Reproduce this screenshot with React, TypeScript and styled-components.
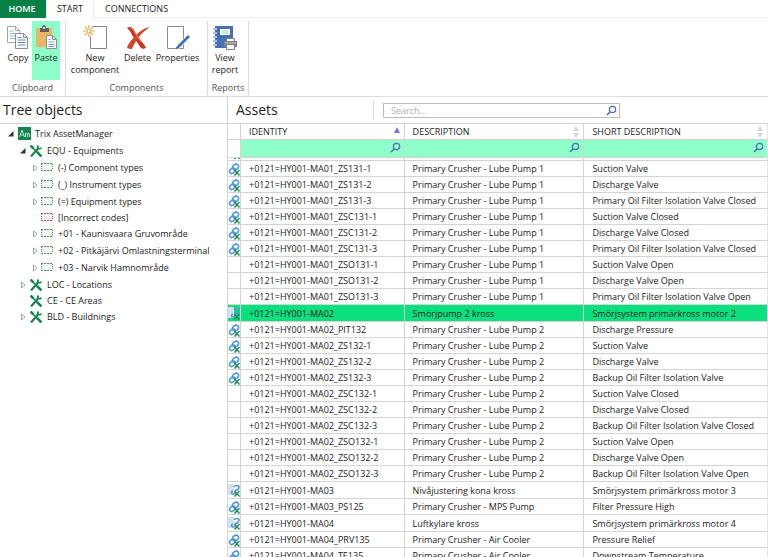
import React from "react";
import styled, { createGlobalStyle, css } from "styled-components";

const line = "#d4d4d4";

const GlobalStyle = createGlobalStyle`
  * { box-sizing: border-box; }
  html, body, #root { height: 100%; }
  body {
    margin: 0;
    background: #fff;
    color: #222;
    font-family: "Open Sans", "Noto Sans", sans-serif;
    font-size: 9px;
    overflow: hidden;
  }
  button, input { font: inherit; color: inherit; }
  button { border: 0; padding: 0; background: none; cursor: pointer; }
  svg { display: block; flex: none; }
`;

const Page = styled.div`
  height: 100vh;
  display: flex;
  flex-direction: column;
  overflow: hidden;
`;

const Tabs = styled.nav`
  display: flex;
  height: 18px;
  flex: none;
  border-bottom: 1px solid #ececec;
`;

const Tab = styled.button<{ $kind?: "home" | "active" }>`
  height: 18px;
  padding: 0 11px;
  line-height: 18px;
  ${(p) => p.$kind === "home" && css`
    width: 46px;
    padding: 0 2px 0 0;
    background: #087f45;
    color: #fff;
    font-weight: 600;
  `}
  ${(p) => p.$kind === "active" && css`
    width: 48px;
    padding: 0;
    background: #fff;
    border: 1px solid #ececec;
    border-width: 0 1px;
  `}
`;

const Ribbon = styled.header`
  display: flex;
  flex: none;
  height: 79px;
  padding: 3px 0 1px;
  border-bottom: 1px solid #dedede;
`;

const Group = styled.section<{ $width: number }>`
  width: ${(p) => p.$width}px;
  display: flex;
  flex-direction: column;
  border-right: 1px solid #dcdcdc;
`;

const Tools = styled.div<{ $inset: number }>`
  display: flex;
  height: 59px;
  padding-left: ${(p) => p.$inset}px;
`;

const Tool = styled.button<{ $width: number; $active?: boolean }>`
  width: ${(p) => p.$width}px;
  height: 59px;
  padding-top: 4px;
  display: flex;
  flex-direction: column;
  align-items: center;
  line-height: 12px;
  background: ${(p) => (p.$active ? "#8effc9" : "transparent")};
  span { margin-top: 2px; }
`;

const GroupName = styled.div`
  text-align: center;
  line-height: 15px;
  color: #505050;
`;

const Body = styled.main`
  flex: 1;
  min-height: 0;
  display: grid;
  grid-template-columns: 228px minmax(0, 1fr);
`;

const Sidebar = styled.aside`
  border-right: 1px solid ${line};
`;

const PanelHead = styled.div`
  display: flex;
  align-items: center;
  height: 27px;
  border-bottom: 1px solid ${line};
`;

const Title = styled.h2<{ $inset: number }>`
  margin: 0;
  padding-left: ${(p) => p.$inset}px;
  font-size: 14px;
  line-height: 24px;
  font-weight: 400;
`;

const Tree = styled.ul`
  list-style: none;
  margin: 0;
  padding: 1px 0 0;
`;

const TreeRow = styled.li<{ $level: number; $leaf?: boolean }>`
  display: flex;
  align-items: center;
  height: ${(p) => (p.$leaf ? 15 : 17)}px;
  padding-left: ${(p) => 6 + p.$level * 12}px;
  white-space: nowrap;
`;

const Twisty = styled.button`
  width: 10px;
  height: 14px;
  display: flex;
  align-items: center;
  justify-content: center;
`;

const NodeIcon = styled.span<{ $level: number }>`
  width: ${(p) => (p.$level === 2 ? 18 : 19)}px;
  display: flex;
  padding-left: ${(p) => (p.$level === 2 ? 1 : 2)}px;
`;

const Content = styled.section`
  min-width: 0;
  overflow: hidden;
`;

const SearchArea = styled.div`
  margin-left: auto;
  width: 395px;
  height: 20px;
  padding-left: 9px;
  border-left: 1px solid #dcdcdc;
  display: flex;
  align-items: center;
`;

const SearchBox = styled.label`
  width: 237px;
  height: 15px;
  display: flex;
  align-items: center;
  padding: 0 2px 0 7px;
  border: 1px solid #bdbdbd;
  input {
    flex: 1;
    min-width: 0;
    height: 13px;
    padding: 0;
    border: 0;
    outline: 0;
    background: none;
  }
  input::placeholder { color: #b0b0b0; opacity: 1; }
`;

const Table = styled.table`
  width: 100%;
  table-layout: fixed;
  border-collapse: separate;
  border-spacing: 0;
  th, td {
    padding: 0 0 0 8px;
    border-right: 1px solid ${line};
    border-bottom: 1px solid ${line};
    font-weight: 400;
    text-align: left;
    white-space: nowrap;
    overflow: hidden;
  }
  td:first-child { padding: 0; }
  th:last-child, td:last-child { border-right-color: #e6e6e6; }
`;

const HeadRow = styled.tr`
  th { height: 16px; line-height: 15px; }
`;

const HeadCell = styled.div`
  display: flex;
  align-items: center;
  justify-content: space-between;
  padding-right: 3px;
`;

const FilterRow = styled.tr`
  td { height: 18px; background: #8effc9; }
  td:first-child { background: #fff; }
`;

const FilterBox = styled.label`
  height: 17px;
  display: flex;
  align-items: center;
  padding: 0 3px 2px 0;
  input {
    flex: 1;
    min-width: 0;
    height: 14px;
    padding: 0;
    border: 0;
    outline: 0;
    background: none;
  }
`;

const GapRow = styled.tr`
  td { height: 3px; line-height: 0; font-size: 0; }
`;

const Row = styled.tr<{ $system: boolean; $selected: boolean }>`
  td {
    height: ${(p) => (p.$system ? 17 : 16)}px;
    line-height: 15px;
    background: ${(p) => (p.$selected ? "#0be07e" : "#fff")};
  }
`;

const CopyIcon = () => (
  <svg width="24" height="25" viewBox="0 0 24 25" fill="#fff" stroke="#a2a6ab">
    <path d="M1.5 1.5h8l4 4v12h-12z" />
    <path d="M9.5 1.5v4h4" fill="none" />
    <path d="M3.5 6h4M3.5 8.500h7M3.500 11h7M3.500 13.500h7" stroke="#9db8de" />
    <path d="M9.500 8.500h8l4 4v11h-12z" stroke="#8a8f96" />
    <path d="M17.500 8.500v4h4" fill="none" stroke="#8a8f96" />
    <path d="M11.500 12.500h4M11.500 15h8M11.500 17.500h8M11.500 20h8" stroke="#5f8bc9" />
  </svg>
);

const PasteIcon = () => (
  <svg width="24" height="25" viewBox="0 0 24 25">
    <path d="M2 3h16v19H2z" fill="#e8b768" />
    <path d="M6 3h2c0-4 4-4 4 0h3v4H6z" fill="#5f5f5f" />
    <circle cx="10" cy="3" r="1" fill="#fff" />
    <path d="M12.500 10.500h6l4 4v9h-10z" fill="#fff" stroke="#8a8f96" />
    <path d="M18.500 10.500v4h4" fill="none" stroke="#8a8f96" />
    <path d="M14.500 14.500h2M14.500 17h6M14.500 19.500h6M14.500 21.500h6" stroke="#7c9fd2" />
  </svg>
);

const NewIcon = () => (
  <svg width="26" height="25" viewBox="0 0 26 25" fill="none">
    <path d="M8.500 1.500h16v22h-16z" fill="#fff" stroke="#858585" />
    <circle cx="7" cy="6" r="6" fill="#fff" />
    <path d="M7 0v3M7 9v3M1 6h3M10 6h3M3 2l2 2M9 8l2 2M11 2L9 4M5 8l-2 2" stroke="#e6ab4b" strokeWidth="1.200" />
    <circle cx="7" cy="6" r="2" stroke="#e6ab4b" strokeWidth="1.200" />
  </svg>
);

const DeleteIcon = () => (
  <svg width="26" height="25" viewBox="0 0 26 25">
    <path d="M2 3c3-2 5-1 7 2 2 4 5 8 8 12 2 2 3 4 4 6-2 1-4 1-5 0C13 19 10 14 7 10 6 7 4 5 2 3z" fill="#c9351d" />
    <path d="M25 2c-7 5-11 9-14 14-1 2-3 5-4 8-2 0-4 0-5-2 2-4 5-8 9-12 4-4 8-7 14-8z" fill="#d5452b" />
    <path d="M5 3c2 0 3 2 5 5l6 9" fill="none" stroke="#ea7a60" />
  </svg>
);

const PropertiesIcon = () => (
  <svg width="26" height="25" viewBox="0 0 26 25">
    <path d="M2.500 1.500h16v22h-16z" fill="#fff" stroke="#8a8a8a" />
    <path d="M11 25l1-4L23 9l3 3-11 11z" fill="#fff" />
    <path d="M11 24l2-4L23 10l2 2-10 10z" fill="#3f70ba" />
    <path d="M11 24l1-3 2 2z" fill="#274a85" />
  </svg>
);

const ReportIcon = () => (
  <svg width="26" height="25" viewBox="0 0 26 25">
    <path d="M3 1h18v22H3z" fill="#4570b5" />
    <path d="M8 4h10v6H8z" fill="#fff" />
    <path d="M10 6h6M10 8h6" stroke="#a9bfe2" />
    <path d="M1 4h4M1 8h4M1 12h4M1 16h4M1 20h4" stroke="#fff" strokeWidth="2" />
    <path d="M1 4h4M1 8h4M1 12h4M1 16h4M1 20h4" stroke="#5d7fbd" />
    <path d="M14.500 13.500h8v4h-8z" fill="#fff" stroke="#808080" />
    <path d="M12 16h13v6H12z" fill="#808080" />
    <path d="M13 18h11" stroke="#d0d0d0" />
    <path d="M14.500 19.500h8v5h-8z" fill="#fff" stroke="#808080" />
  </svg>
);

const SearchIcon = () => (
  <svg width="11" height="11" viewBox="0 0 11 11" fill="none" stroke="#4a6fb8" strokeWidth="1.200">
    <circle cx="6.500" cy="4.500" r="3.200" />
    <path d="M4 7L1 10" strokeWidth="1.600" />
  </svg>
);

const ToolsIcon = () => (
  <svg width="12" height="12" viewBox="0 0 12 12" stroke="#168451" fill="none">
    <path d="M1 11.500l7-8" strokeWidth="2.200" />
    <path d="M8.500.5c-2 2 0 4 3 2.500" strokeWidth="1.800" />
    <path d="M.5.500l3 3M7 7l4.500 4.500" strokeWidth="2.600" />
    <path d="M3 3l6 6" strokeWidth="1.500" />
  </svg>
);

const TypeIcon = ({ red }: { red?: boolean }) => (
  <svg width="12" height="12" viewBox="0 0 12 12" stroke={red ? "#cf4444" : "#3f9650"}>
    <path d="M0 1h12v8H0z" fill="#f7f7f7" stroke="none" />
    <path d="M0 1.500h12M0 8.500h12" strokeDasharray="2 1" />
    <path d="M.5 2v6M11.500 2v6" strokeDasharray="1 1" />
  </svg>
);

const AppIcon = () => (
  <svg width="13" height="13" viewBox="0 0 13 13">
    <path d="M0 0h13v13H0z" fill="#168451" />
    <path d="M1.500 10L4 3l2.500 7M2.500 8H6M7.500 10V6M7.500 7c0-1 2-1 2 0v3M9.500 7c0-1 2-1 2 0v3" fill="none" stroke="#b9e2cd" />
  </svg>
);

const Arrow = ({ open }: { open: boolean }) => (
  <svg width="8" height="8" viewBox="0 0 8 8">
    {open ? <path d="M6.500 1v5.500H1z" fill="#333" /> : <path d="M2.500 1L6 4 2.500 7z" fill="#fff" stroke="#a4a4a4" />}
  </svg>
);

const SortIcon = ({ up }: { up?: boolean }) => (
  <svg width="8" height="12" viewBox="0 0 8 12">
    {up ? <path d="M4 1l3 6H1z" fill="#8175dc" /> : <path d="M4 0l3 5H1zM4 12L1 7h6z" fill="#d6d6d6" />}
  </svg>
);

const LinkIcon = ({ page }: { page?: boolean }) => (
  <svg width="12" height="14" viewBox="0 0 12 14" fill="none">
    {page ? (
      <>
        <path d="M0 1h5l1 1v10H0z" fill="#d3e2f1" />
        <path d="M6 4c1-2 5-2 5 0s-2 4-4 3M5 8c-2 0-2 3 0 3s2-1 3-2" stroke="#5596d3" strokeWidth="1.600" />
      </>
    ) : (
      <>
        <ellipse cx="7.500" cy="5" rx="3.200" ry="2.500" transform="rotate(-35 7.500 5)" stroke="#4a97dc" strokeWidth="1.600" />
        <ellipse cx="4.500" cy="8.800" rx="3.200" ry="2.300" transform="rotate(-35 4.500 8.800)" stroke="#4a97dc" strokeWidth="1.600" />
      </>
    )}
    <path d="M6.500 8l5 5.500M11.500 8l-5 5.500" stroke="#1f8a50" strokeWidth="1.500" />
  </svg>
);

const LinkTail = () => (
  <svg width="12" height="2" viewBox="0 0 12 2">
    <path d="M6 0h2v1H6zM10 0h2v1h-2z" fill="#4ba176" />
  </svg>
);

type Kind = "app" | "tools" | "type" | "wrong";
const tree: { level: number; label: string; kind: Kind; open?: boolean; leaf?: boolean }[] = [
  { level: 0, label: "Trix AssetManager", kind: "app", open: true },
  { level: 1, label: "EQU - Equipments", kind: "tools", open: true },
  { level: 2, label: "(-) Component types", kind: "type" },
  { level: 2, label: "(_) Instrument types", kind: "type" },
  { level: 2, label: "(=) Equipment types", kind: "type" },
  { level: 2, label: "[Incorrect codes]", kind: "wrong", leaf: true },
  { level: 2, label: "+01 - Kaunisvaara Gruvområde", kind: "type" },
  { level: 2, label: "+02 - Pitkäjärvi Omlastningsterminal", kind: "type" },
  { level: 2, label: "+03 - Narvik Hamnområde", kind: "type" },
  { level: 1, label: "LOC - Locations", kind: "tools" },
  { level: 1, label: "CE - CE Areas", kind: "tools", leaf: true },
  { level: 1, label: "BLD - Buildnings", kind: "tools" },
];

type Mark = "link" | "page" | "";
const p1 = "Primary Crusher - Lube Pump 1";
const p2 = "Primary Crusher - Lube Pump 2";
const assets: [Mark, string, string, string][] = [
  ["link", "MA01_ZS131-1", p1, "Suction Valve"],
  ["link", "MA01_ZS131-2", p1, "Discharge Valve"],
  ["link", "MA01_ZS131-3", p1, "Primary Oil Filter Isolation Valve Closed"],
  ["link", "MA01_ZSC131-1", p1, "Suction Valve Closed"],
  ["link", "MA01_ZSC131-2", p1, "Discharge Valve Closed"],
  ["link", "MA01_ZSC131-3", p1, "Primary Oil Filter Isolation Valve Closed"],
  ["", "MA01_ZSO131-1", p1, "Suction Valve Open"],
  ["", "MA01_ZSO131-2", p1, "Discharge Valve Open"],
  ["", "MA01_ZSO131-3", p1, "Primary Oil Filter Isolation Valve Open"],
  ["page", "MA02", "Smörjpump 2 kross", "Smörjsystem primärkross motor 2"],
  ["link", "MA02_PIT132", p2, "Discharge Pressure"],
  ["link", "MA02_ZS132-1", p2, "Suction Valve"],
  ["link", "MA02_ZS132-2", p2, "Discharge Valve"],
  ["link", "MA02_ZS132-3", p2, "Backup Oil Filter Isolation Valve"],
  ["", "MA02_ZSC132-1", p2, "Suction Valve Closed"],
  ["", "MA02_ZSC132-2", p2, "Discharge Valve Closed"],
  ["", "MA02_ZSC132-3", p2, "Backup Oil Filter Isolation Valve Closed"],
  ["", "MA02_ZSO132-1", p2, "Suction Valve Open"],
  ["", "MA02_ZSO132-2", p2, "Discharge Valve Open"],
  ["", "MA02_ZSO132-3", p2, "Backup Oil Filter Isolation Valve Open"],
  ["page", "MA03", "Nivåjustering kona kross", "Smörjsystem primärkross motor 3"],
  ["link", "MA03_PS125", "Primary Crusher - MPS Pump", "Filter Pressure High"],
  ["page", "MA04", "Luftkylare kross", "Smörjsystem primärkross motor 4"],
  ["link", "MA04_PRV135", "Primary Crusher - Air Cooler", "Pressure Relief"],
  ["link", "MA04_TE135", "Primary Crusher - Air Cooler", "Downstream Temperature"],
];

const columns = ["IDENTITY", "DESCRIPTION", "SHORT DESCRIPTION"];

const LinkCol = styled.col`width: 13px;`;
const IdentityCol = styled.col`width: 30.3%;`;
const DescriptionCol = styled.col`width: 33.3%;`;

export default function App() {
  return (
    <Page>
      <GlobalStyle />
      <Tabs>
        <Tab $kind="home">HOME</Tab>
        <Tab $kind="active">START</Tab>
        <Tab>CONNECTIONS</Tab>
      </Tabs>
      <Ribbon>
        <Group $width={66}>
          <Tools $inset={4}>
            <Tool $width={28}><CopyIcon /><span>Copy</span></Tool>
            <Tool $width={28} $active><PasteIcon /><span>Paste</span></Tool>
          </Tools>
          <GroupName>Clipboard</GroupName>
        </Group>
        <Group $width={142}>
          <Tools $inset={2}>
            <Tool $width={54}><NewIcon /><span>New<br />component</span></Tool>
            <Tool $width={31}><DeleteIcon /><span>Delete</span></Tool>
            <Tool $width={49}><PropertiesIcon /><span>Properties</span></Tool>
          </Tools>
          <GroupName>Components</GroupName>
        </Group>
        <Group $width={41}>
          <Tools $inset={0}>
            <Tool $width={34}><ReportIcon /><span>View<br />report</span></Tool>
          </Tools>
          <GroupName>Reports</GroupName>
        </Group>
      </Ribbon>
      <Body>
        <Sidebar>
          <PanelHead><Title $inset={3}>Tree objects</Title></PanelHead>
          <Tree>
            {tree.map((n) => (
              <TreeRow key={n.label} $level={n.level} $leaf={n.leaf}>
                <Twisty aria-label={`Toggle ${n.label}`} disabled={n.leaf}>{!n.leaf && <Arrow open={!!n.open} />}</Twisty>
                <NodeIcon $level={n.level}>
                  {n.kind === "app" ? <AppIcon /> : n.kind === "tools" ? <ToolsIcon /> : <TypeIcon red={n.kind === "wrong"} />}
                </NodeIcon>
                {n.label}
              </TreeRow>
            ))}
          </Tree>
        </Sidebar>
        <Content>
          <PanelHead>
            <Title $inset={8}>Assets</Title>
            <SearchArea>
              <SearchBox>
                <input type="text" placeholder="Search..." aria-label="Search assets" />
                <SearchIcon />
              </SearchBox>
            </SearchArea>
          </PanelHead>
          <Table>
            <colgroup>
              <LinkCol />
              <IdentityCol />
              <DescriptionCol />
              <col />
            </colgroup>
            <thead>
              <HeadRow>
                <th aria-label="Links" />
                {columns.map((c, i) => (
                  <th key={c}><HeadCell>{c}<SortIcon up={i === 0} /></HeadCell></th>
                ))}
              </HeadRow>
            </thead>
            <tbody>
              <FilterRow>
                <td />
                {columns.map((c) => (
                  <td key={c}><FilterBox><input type="text" aria-label={`Filter ${c}`} /><SearchIcon /></FilterBox></td>
                ))}
              </FilterRow>
              <GapRow><td><LinkTail /></td><td /><td /><td /></GapRow>
              {assets.map(([mark, id, desc, short]) => (
                <Row key={id} $system={mark === "page"} $selected={id === "MA02"}>
                  <td>{mark && <LinkIcon page={mark === "page"} />}</td>
                  <td>+0121=HY001-{id}</td>
                  <td>{desc}</td>
                  <td>{short}</td>
                </Row>
              ))}
            </tbody>
          </Table>
        </Content>
      </Body>
    </Page>
  );
}
